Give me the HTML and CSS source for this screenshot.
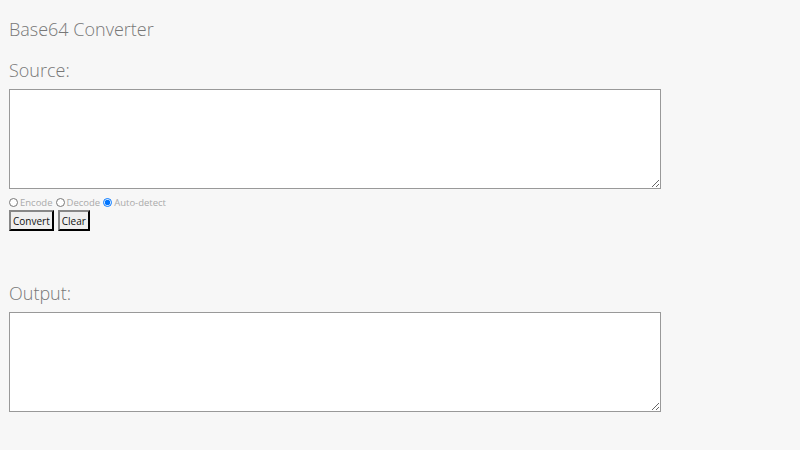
FILE: index.html
```html
<!DOCTYPE html>
<html>
<head>
<meta charset="utf-8">
<link rel="stylesheet" href="styles.css">
</head>
<body>
<h1 class="title">Base64 Converter</h1>
<section class="block">
  <h2 class="label">Source:</h2>
  <textarea class="box"></textarea>
  <div class="modes">
    <label><input type="radio" name="m"> Encode</label>
    <label><input type="radio" name="m"> Decode</label>
    <label><input type="radio" name="m" checked> Auto-detect</label>
  </div>
  <div class="actions">
    <button class="btn">Convert</button>
    <button class="btn">Clear</button>
  </div>
</section>
<section class="block out">
  <h2 class="label">Output:</h2>
  <textarea class="box"></textarea>
</section>
</body>
</html>
```
FILE: styles.css
```css
html, body { margin: 0; background: #f7f7f7; }
body { padding: 16px 9px; font-family: "Open Sans", sans-serif; color: #777; }
.title { font-size: 18px; font-weight: 300; margin: 0 0 15px; line-height: 26px; }
.label { font-size: 18px; font-weight: 300; margin: 0 0 6px; line-height: 26px; }
.box { display: block; width: 652px; height: 100px; box-sizing: border-box; border: 1px solid #999; background: #fff; margin: 0; }
.modes { font-size: 9.5px; color: #aaa; margin-top: 7px; display: flex; gap: 3px; align-items: center; }
.modes label { display: flex; align-items: center; }
.modes input { margin: 0 2px 0 0; width: 9px; height: 9px; }
.actions { display: flex; gap: 4px; margin-top: 1px; }
.btn { font-family: "Open Sans", sans-serif; font-size: 10px; color: #111; background: #efefef; border: 2px outset #333; padding: 1px 2px; height: 21px; }
.out { margin-top: 49px; }
```
